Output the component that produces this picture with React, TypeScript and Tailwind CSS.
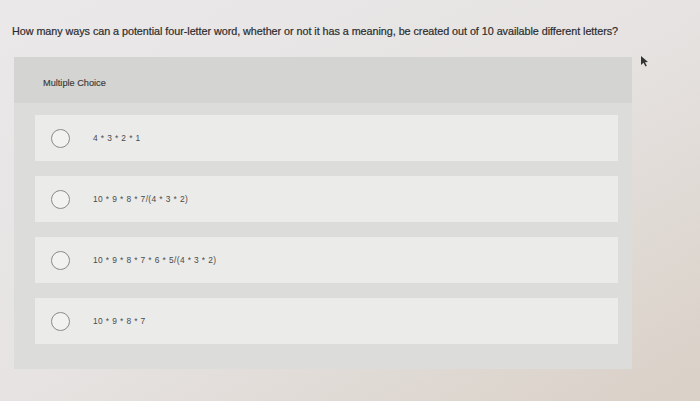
const OPTIONS = [
  "4 * 3 * 2 * 1",
  "10 * 9 * 8 * 7/(4 * 3 * 2)",
  "10 * 9 * 8 * 7 * 6 * 5/(4 * 3 * 2)",
  "10 * 9 * 8 * 7",
];

function Cursor() {
  return (
    <svg width="9" height="12" viewBox="0 0 9 12" className="absolute left-[640px] top-[55px]">
      <path d="M1 1 L1 10 L3.5 7.8 L5.5 11.5 L6.8 10.8 L5 7.2 L8 7 Z" fill="#333" />
    </svg>
  );
}

export default function App() {
  return (
    <div
      className="relative h-[401px] w-[700px] overflow-hidden bg-gradient-to-br from-[#eae8e9] via-[#e6e3e2] to-[#d9d0c6] pt-[23px]"
      style={{ fontFamily: '"Liberation Sans", Arial, sans-serif' }}
    >
      <p className="pl-[12px] text-[10.8px] tracking-[-0.05px] text-[#2c2c2d] [-webkit-text-stroke:0.2px_#2c2c2d]">
        How many ways can a potential four-letter word, whether or not it has a meaning, be created out of 10 available different letters?
      </p>

      <div className="ml-[14px] mt-[18px] w-[618px] bg-[#dcdcda]">
        <div className="flex h-[46px] items-center bg-[#d4d5d3] pl-[29px] pt-[8px] text-[9.2px] text-[#3a3a3a] [-webkit-text-stroke:0.15px_#3a3a3a]">
          Multiple Choice
        </div>
        <div className="flex flex-col gap-[15px] pl-[21px] pr-[14px] pb-[25px] pt-[12px]">
          {OPTIONS.map((o) => (
            <div key={o} className="flex h-[46px] items-center bg-[#ebebe9] pl-[16px]">
              <span className="h-[19px] w-[19px] shrink-0 rounded-full border-[1.5px] border-[#8a8a8a] bg-[#f2f2f1]" />
              <span className="ml-[23px] text-[8.4px] tracking-[0.4px] text-[#4a4a4a]">{o}</span>
            </div>
          ))}
        </div>
      </div>
      <Cursor />
    </div>
  );
}
